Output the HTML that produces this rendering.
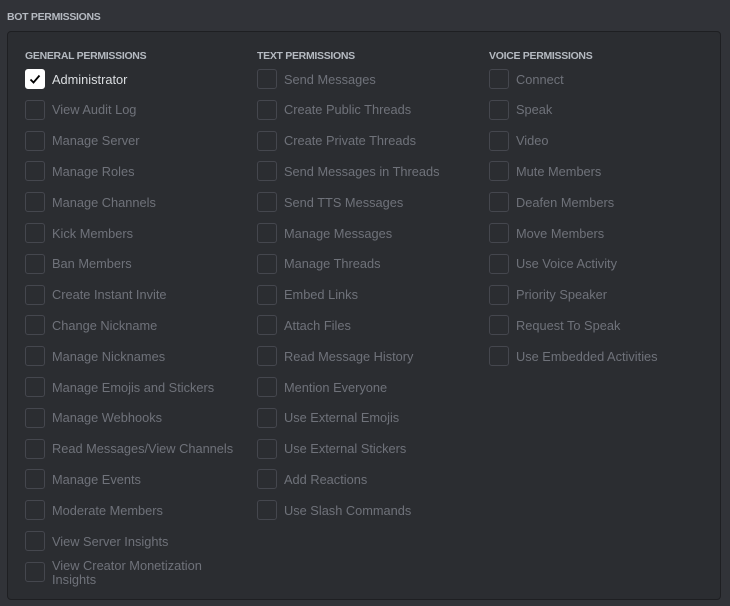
<!DOCTYPE html>
<html><head><meta charset="utf-8"><style>
*{margin:0;padding:0;box-sizing:border-box}
body{width:730px;height:606px;background:#313338;font-family:"Liberation Sans",sans-serif;position:relative;overflow:hidden}
.h{position:absolute;font-size:10.5px;font-weight:bold;color:#b5bac1;letter-spacing:-0.3px}
.box{position:absolute;left:7px;top:31px;width:714px;height:569px;background:#2b2d31;border:1px solid #1e1f22;border-radius:4px}
.r{position:absolute;height:20px;display:flex;align-items:center;font-size:12.8px;color:#6f727a}
.cb{width:20px;height:20px;border:1px solid #45474e;border-radius:3px;margin-right:7px;flex:none}
.on{color:#dbdee1}
.on .cb{background:#fff;border-color:#fff;display:flex;align-items:center;justify-content:center}
</style></head><body>
<div class="h" style="left:7px;top:11px">BOT PERMISSIONS</div>
<div class="box"></div>
<div class="h" style="left:25px;top:50px">GENERAL PERMISSIONS</div>
<div class="h" style="left:257px;top:50px">TEXT PERMISSIONS</div>
<div class="h" style="left:489px;top:50px">VOICE PERMISSIONS</div>
<div id="c"></div>
<script>
var cols=[[25,["Administrator","View Audit Log","Manage Server","Manage Roles","Manage Channels","Kick Members","Ban Members","Create Instant Invite","Change Nickname","Manage Nicknames","Manage Emojis and Stickers","Manage Webhooks","Read Messages/View Channels","Manage Events","Moderate Members","View Server Insights"]],
[257,["Send Messages","Create Public Threads","Create Private Threads","Send Messages in Threads","Send TTS Messages","Manage Messages","Manage Threads","Embed Links","Attach Files","Read Message History","Mention Everyone","Use External Emojis","Use External Stickers","Add Reactions","Use Slash Commands"]],
[489,["Connect","Speak","Video","Mute Members","Deafen Members","Move Members","Use Voice Activity","Priority Speaker","Request To Speak","Use Embedded Activities"]]];
var h="";
cols.forEach(function(c,ci){c[1].forEach(function(t,i){var y=69+i*30.8;var on=ci==0&&i==0;
h+='<div class="r'+(on?' on':'')+'" style="left:'+c[0]+'px;top:'+y+'px"><div class="cb">'+(on?'<svg width="12" height="12" viewBox="0 0 12 12"><path d="M1.5 6.5l3 3 6-7" stroke="#000" stroke-width="1.8" fill="none"/></svg>':'')+'</div>'+t+'</div>';});});
h+='<div class="r" style="left:25px;top:562px;height:20px"><div class="cb"></div><div style="line-height:14px;margin-top:2px">View Creator Monetization<br>Insights</div></div>';
document.getElementById("c").innerHTML=h;
</script>
</body></html>
